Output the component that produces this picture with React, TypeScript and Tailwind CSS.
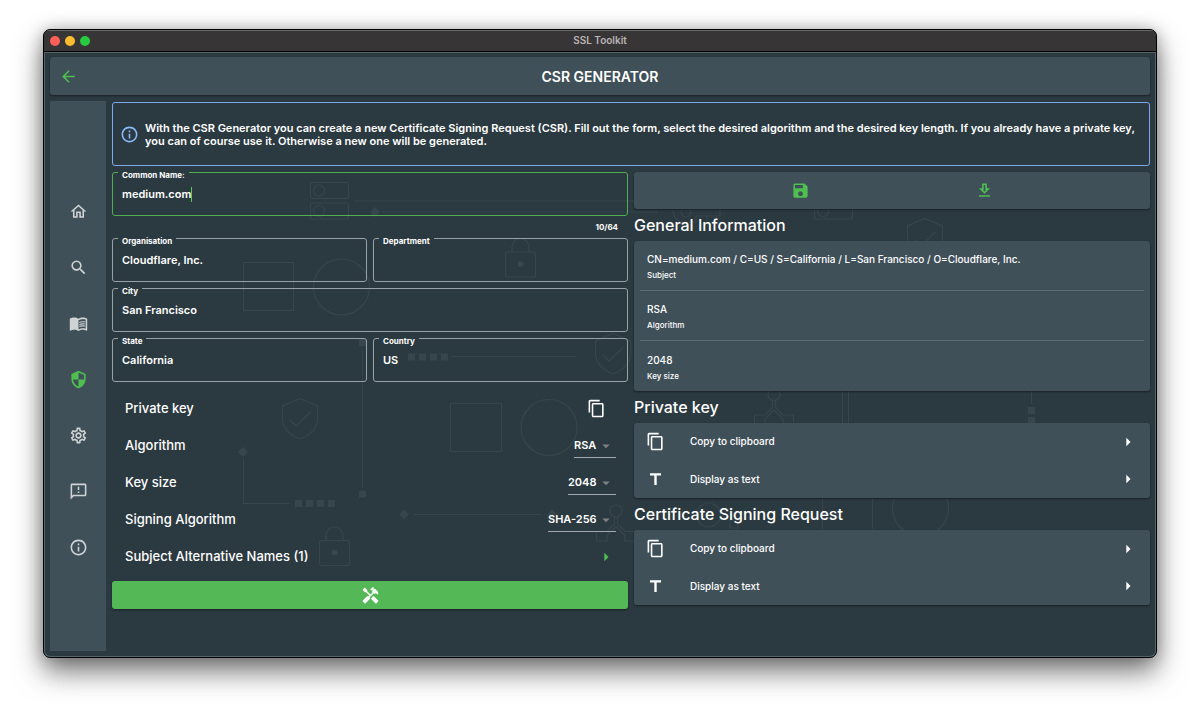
import React from 'react';
import {
  MdArrowBack,
  MdArrowDropDown,
  MdArrowRight,
  MdContentCopy,
  MdHandyman,
  MdInfoOutline,
  MdMenuBook,
  MdOutlineDownload,
  MdOutlineFeedback,
  MdOutlineHome,
  MdOutlineSettings,
  MdSave,
  MdSearch,
  MdTitle,
} from 'react-icons/md';

function ShieldIcon({ className }: { className?: string }) {
  return (
    <svg viewBox="0 0 24 24" fill="currentColor" className={className}>
      <path
        fillRule="evenodd"
        d="M12 1L3 5v6c0 5.55 3.84 10.74 9 12 5.16-1.26 9-6.45 9-12V5l-9-4zM12 12H5c.53 4.12 3.28 7.79 7 8.94V12h7V6.3l-7-3.11V12z"
      />
    </svg>
  );
}

function Server({ x, y }: { x: number; y: number }) {
  return (
    <g transform={`translate(${x} ${y})`}>
      <rect x="0.5" y="0.5" width="38" height="16" rx="2" />
      <circle cx="9" cy="8.500" r="5.500" />
      <rect x="0.5" y="21" width="38" height="16" rx="2" />
      <circle cx="9" cy="29" r="5.500" />
    </g>
  );
}

function Padlock({ x, y }: { x: number; y: number }) {
  return (
    <g transform={`translate(${x} ${y})`}>
      <rect x="0.5" y="14" width="30" height="25" rx="2" />
      <path d="M7 14V9a8.500 8.500 0 0 1 17 0v5" />
      <circle cx="15.500" cy="26" r="2.500" className="fill-[#3a494f]" />
    </g>
  );
}

function CheckShield({ x, y }: { x: number; y: number }) {
  return (
    <g transform={`translate(${x} ${y})`}>
      <path d="M18 0.500L35.500 8v13c0 9-8 16.500-17.500 20C8.500 37.500 0.500 30 0.500 21V8z" />
      <path d="M8 22l6 6 14.500-14" />
    </g>
  );
}

function Person({ x, y }: { x: number; y: number }) {
  return (
    <g transform={`translate(${x} ${y})`}>
      <circle cx="20" cy="6.500" r="6" />
      <path d="M18.500 12.500v7L11 27H0.500v9.500h10.500V31l9-9 9 9v5.500h10.500V27H29l-7.500-7.500v-7" />
    </g>
  );
}

function Squares({ x, y }: { x: number; y: number }) {
  return (
    <g transform={`translate(${x} ${y})`} className="fill-[#37464d] stroke-none">
      <rect width="7" height="7" />
      <rect x="11" width="7" height="7" />
      <rect x="22" width="7" height="7" />
      <rect x="33" width="7" height="7" />
    </g>
  );
}

function Diamond({ x, y }: { x: number; y: number }) {
  return <path d={`M${x} ${y - 5}l5 5-5 5-5-5z`} className="fill-[#37464d] stroke-none" />;
}

function Backdrop() {
  return (
    <svg aria-hidden="true" width="1112" height="604" className="pointer-events-none absolute left-0 top-0">
      <g transform="translate(-44 -52)" fill="none" stroke="#37464d" strokeWidth="1.2">
        <Server x={310} y={182} />
        <path d="M354 201H634M382 212H658" />
        <Diamond x={375} y={212} />
        <Padlock x={505} y={238} />
        <rect x="243.500" y="262.500" width="50" height="48" />
        <circle cx="341.500" cy="287" r="28" />
        <path d="M362.500 350V488" />
        <rect x="359" y="339" width="7" height="7" className="fill-[#37464d] stroke-none" />
        <rect x="359" y="490.500" width="7" height="7" className="fill-[#37464d] stroke-none" />
        <Squares x={408} y={353.5} />
        <path d="M451 356.500H576" />
        <CheckShield x={595} y={333} />
        <CheckShield x={282} y={398} />
        <Diamond x={243} y={452} />
        <path d="M243.500 459V503.500H290" />
        <Squares x={295} y={500} />
        <Padlock x={319} y={526.5} />
        <rect x="450.500" y="403.500" width="51" height="48" />
        <circle cx="549" cy="427.500" r="28" />
        <Diamond x={404} y={514.500} />
        <path d="M414 514.500H541" />
        <Diamond x={552} y={514.500} />
        <Person x={596} y={504.500} />
        <circle cx="686" cy="212" r="5" />
        <path d="M673 210c0 6 3 10 8 12h15v-6h11v6M720 206v10h-13" />
        <Server x={814} y={182} />
        <CheckShield x={907} y={218} />
        <Person x={754} y={388} />
        <path d="M842.500 391V423M848.500 391V423M1031.500 391V404" />
        <rect x="1028" y="407" width="7" height="7" className="fill-[#37464d] stroke-none" />
        <rect x="1028" y="417" width="7" height="7" className="fill-[#37464d] stroke-none" />
        <circle cx="708.500" cy="515" r="12" />
        <path d="M730 520v8h8v-8zM822.500 497V529M872.500 497V529" />
        <circle cx="920.500" cy="508" r="28" />
      </g>
    </svg>
  );
}

const navItems = [
  { label: 'Home', Icon: MdOutlineHome, active: false },
  { label: 'Search', Icon: MdSearch, active: false },
  { label: 'Documentation', Icon: MdMenuBook, active: false },
  { label: 'Certificates', Icon: ShieldIcon, active: true },
  { label: 'Settings', Icon: MdOutlineSettings, active: false },
  { label: 'Feedback', Icon: MdOutlineFeedback, active: false },
  { label: 'About', Icon: MdInfoOutline, active: false },
];

function Field({ id, label, value, focused = false }: { id: string; label: string; value: string; focused?: boolean }) {
  return (
    <div
      className={`relative h-11 min-w-0 flex-1 rounded-[3px] border ${focused ? 'border-[#4fae50]' : 'border-[#98a1a5]'}`}
    >
      <label
        htmlFor={id}
        className="absolute -top-px left-[5px] bg-[#2b3940] px-1 text-[8px] leading-[6px] font-bold text-white"
      >
        {label}
      </label>
      {focused && (
        <span aria-hidden="true" className="absolute left-[9px] top-[15px] flex text-[11px] leading-[13px] font-semibold">
          <span className="invisible">{value}</span>
          <span className="-my-px w-px bg-[#4fd050]" />
        </span>
      )}
      <input
        id={id}
        defaultValue={value}
        className="h-full w-full bg-transparent px-[9px] text-[11px] font-semibold text-white outline-none"
      />
    </div>
  );
}

function SelectRow({ id, label, value }: { id: string; label: string; value: string }) {
  return (
    <div className="flex flex-1 items-center justify-between">
      <label htmlFor={id}>{label}</label>
      <span className="relative flex items-center">
        <select
          id={id}
          defaultValue={value}
          className="h-[25px] appearance-none border-b border-[#a0a8ab] bg-transparent pr-[19px] text-[11px] font-semibold text-white outline-none"
        >
          <option>{value}</option>
        </select>
        <MdArrowDropDown className="pointer-events-none absolute right-px size-[18px] text-[#7d8081]" />
      </span>
    </div>
  );
}

const card = 'rounded-[3px] bg-[#3f5059] shadow-[0_1px_2px_rgba(0,0,0,0.45)]';

function SectionTitle({ children }: { children: React.ReactNode }) {
  return <h2 className="flex h-8 items-center text-[16px] font-medium">{children}</h2>;
}

function InfoRow({ value, label }: { value: string; label: string }) {
  return (
    <div className="flex h-[50px] flex-col-reverse justify-center gap-[5px] px-[7px] pt-0.5">
      <dt className="text-[8px] leading-[10px] font-medium">{label}</dt>
      <dd className="text-[10px] leading-[12px] font-medium">{value}</dd>
    </div>
  );
}

function Actions() {
  return (
    <div className={`${card} flex h-[75px] flex-col text-[10px] font-medium`}>
      <button type="button" className="flex flex-1 items-center px-3">
        <MdContentCopy className="size-[19px]" />
        <span className="ml-[25px] flex-1 text-left">Copy to clipboard</span>
        <MdArrowRight className="size-[20px]" />
      </button>
      <button type="button" className="flex flex-1 items-center px-3">
        <MdTitle className="size-[19px]" />
        <span className="ml-[25px] flex-1 text-left">Display as text</span>
        <MdArrowRight className="size-[20px]" />
      </button>
    </div>
  );
}

export default function App() {
  return (
    <div className="flex min-h-screen flex-col bg-white px-[43px] pb-[57px] pt-[29px] font-['Inter','Liberation_Sans',sans-serif] text-white">
      <div className="flex flex-1 flex-col overflow-hidden rounded-[7px] border border-black bg-[#2b3940] shadow-[0_14px_28px_rgba(0,0,0,0.52),0_0_16px_rgba(0,0,0,0.25)]">
        <div className="relative flex h-[22px] items-center justify-center border-b border-black bg-[#383536] inset-shadow-[0_1px_0_#6b6869]">
          <div className="absolute left-[6px] flex gap-[5px]">
            <button type="button" aria-label="Close" className="size-[10px] rounded-full bg-[#ff5f57]" />
            <button type="button" aria-label="Minimise" className="size-[10px] rounded-full bg-[#febc2e]" />
            <button type="button" aria-label="Zoom" className="size-[10px] rounded-full bg-[#28c840]" />
          </div>
          <span className="text-[10px] font-semibold text-[#b8b4b5]">SSL Toolkit</span>
        </div>

        <div className="relative flex flex-1 flex-col gap-[6px] rounded-b-[6px] px-[6px] pb-[6px] pt-[5px] inset-shadow-[0_0_0_1px_#55656c]">
          <Backdrop />
          <header className={`${card} relative flex h-[38px] items-center justify-center`}>
            <button type="button" aria-label="Back" className="absolute left-[9px] text-[#4fbf50]">
              <MdArrowBack className="size-[19px]" />
            </button>
            <h1 className="text-[14px] font-semibold">CSR GENERATOR</h1>
          </header>

          <div className="relative flex flex-1 gap-[6px]">
            <nav className="flex w-14 flex-col items-center justify-center bg-[#3f5059] pt-[6px]">
              {navItems.map(({ label, Icon, active }) => (
                <button
                  key={label}
                  type="button"
                  aria-label={label}
                  className={`flex h-14 w-14 items-center justify-center ${active ? 'text-[#4fbf50]' : 'text-[#cfd3d5]'}`}
                >
                  <Icon className="size-[19px]" />
                </button>
              ))}
            </nav>

            <main className="flex min-w-0 flex-1 flex-col gap-[6px] pt-px">
              <div className="flex h-16 items-center gap-[6px] rounded-[3px] border border-[#7fa8ee] bg-[#2b3940] px-[7px]">
                <MdInfoOutline className="size-[19px] shrink-0 text-[#8ab8fb]" />
                <p className="pt-0.5 text-[11px] leading-[13px] font-semibold">
                  With the CSR Generator you can create a new Certificate Signing Request (CSR). Fill out the form,
                  select the desired algorithm and the desired key length. If you already have a private key, you can of
                  course use it. Otherwise a new one will be generated.
                </p>
              </div>

              <div className="grid grid-cols-2 gap-[6px]">
                <form className="flex flex-col gap-[6px]" onSubmit={(e) => e.preventDefault()}>
                  <div>
                    <div className="flex">
                      <Field id="cn" label="Common Name:" value="medium.com" focused />
                    </div>
                    <div className="h-4 pr-[10px] pt-[5px] text-right text-[8px] leading-[13px] font-bold">10/64</div>
                  </div>
                  <div className="flex gap-[6px]">
                    <Field id="org" label="Organisation" value="Cloudflare, Inc." />
                    <Field id="dept" label="Department" value="" />
                  </div>
                  <div className="flex">
                    <Field id="city" label="City" value="San Francisco" />
                  </div>
                  <div className="flex gap-[6px]">
                    <Field id="state" label="State" value="California" />
                    <Field id="country" label="Country" value="US" />
                  </div>
                  <div className="flex h-[187px] flex-col pl-[13px] pr-3 pt-0.5 text-[13px] font-medium">
                    <div className="flex flex-1 items-center justify-between">
                      Private key
                      <button type="button" aria-label="Paste private key" className="pr-[10px]">
                        <MdContentCopy className="size-[19px]" />
                      </button>
                    </div>
                    <SelectRow id="alg" label="Algorithm" value="RSA" />
                    <SelectRow id="size" label="Key size" value="2048" />
                    <SelectRow id="sig" label="Signing Algorithm" value="SHA-256" />
                    <button type="button" className="flex flex-1 items-center justify-between text-left">
                      Subject Alternative Names (1)
                      <MdArrowRight className="size-[20px] text-[#4fbf50]" />
                    </button>
                  </div>
                  <button
                    type="submit"
                    aria-label="Generate"
                    className="flex h-7 items-center justify-center rounded-[3px] bg-[#54b857] shadow-[0_1px_2px_rgba(0,0,0,0.45)]"
                  >
                    <MdHandyman className="size-[19px]" />
                  </button>
                </form>

                <div className="flex flex-col">
                  <div className={`${card} flex h-[37px] justify-evenly text-[#4fbf50]`}>
                    <button type="button" aria-label="Save" className="flex w-9 items-center justify-center">
                      <MdSave className="size-[19px]" />
                    </button>
                    <button type="button" aria-label="Download" className="flex w-9 items-center justify-center">
                      <MdOutlineDownload className="size-[19px]" />
                    </button>
                  </div>
                  <SectionTitle>General Information</SectionTitle>
                  <dl className={`${card} divide-y divide-[#5d6d75] px-[6px]`}>
                    <InfoRow
                      value="CN=medium.com / C=US / S=California / L=San Francisco / O=Cloudflare, Inc."
                      label="Subject"
                    />
                    <InfoRow value="RSA" label="Algorithm" />
                    <InfoRow value="2048" label="Key size" />
                  </dl>
                  <SectionTitle>Private key</SectionTitle>
                  <Actions />
                  <SectionTitle>Certificate Signing Request</SectionTitle>
                  <Actions />
                </div>
              </div>
            </main>
          </div>
        </div>
      </div>
    </div>
  );
}
